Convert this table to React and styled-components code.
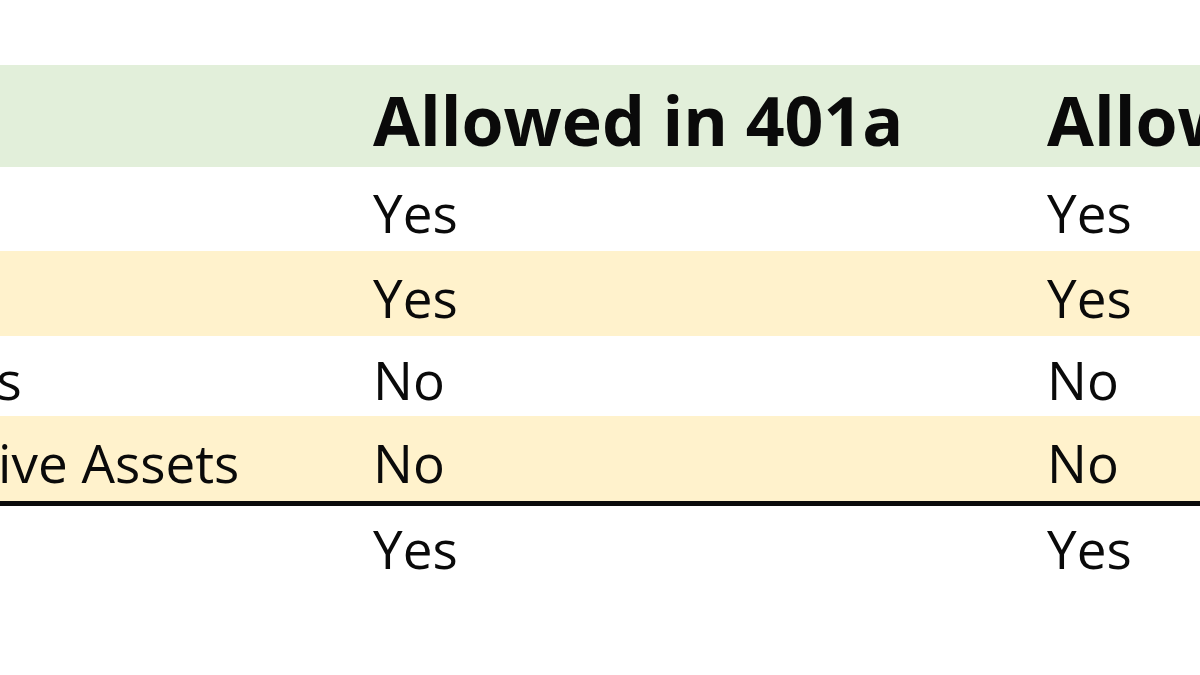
import React from 'react';
import styled, { createGlobalStyle } from 'styled-components';

const GlobalStyle = createGlobalStyle`
  html, body {
    margin: 0;
    padding: 0;
    background: #ffffff;
  }
  body {
    font-family: "Open Sans", "Noto Sans", "DejaVu Sans", sans-serif;
    color: #000;
  }
`;

const Viewport = styled.div`
  width: 1200px;
  height: 675px;
  overflow: hidden;
  padding-top: 65px;
  box-sizing: border-box;
`;

// the sheet is wider than the window; its first column is cut off on the left
const Sheet = styled.div`
  width: 1950px;
  margin-left: -207px;
`;

const Row = styled.div`
  display: grid;
  grid-template-columns: 573px 674px 700px;
  height: ${(p) => p.$height}px;
  background: ${(p) => p.$bg || '#ffffff'};
  border-bottom: ${(p) => (p.$rule ? '5px solid #0b0b0b' : 'none')};
  box-shadow: ${(p) => (p.$rule ? '0 1px 0 #c8c8c8' : 'none')};
`;

const Cell = styled.div`
  display: flex;
  align-items: center;
  padding-left: 7px;
  padding-top: ${(p) => p.$shift ?? 7}px;
  box-sizing: border-box;
  white-space: nowrap;
  font-size: 53px;
  font-weight: 400;
  color: #0a0a0a;
`;

const HeadCell = styled(Cell)`
  font-size: 68px;
  font-weight: 700;
`;

const rows = [
  { label: 'Stocks', a: 'Yes', b: 'Yes', h: 84 },
  { label: 'Bonds', a: 'Yes', b: 'Yes', h: 85, bg: '#fff2cc' },
  { label: 'Artworks', a: 'No', b: 'No', h: 80 },
  { label: 'Alternative Assets', a: 'No', b: 'No', h: 85, bg: '#fff2cc', rule: true },
  { label: 'Cash', a: 'Yes', b: 'Yes', h: 85, shift: 0 },
];

export default function App() {
  return (
    <>
      <GlobalStyle />
      <Viewport>
        <Sheet>
          <Row $height={102} $bg="#e2efda">
            <HeadCell $shift={7} />
            <HeadCell $shift={7}>Allowed in 401a</HeadCell>
            <HeadCell $shift={7}>Allowed in 403b</HeadCell>
          </Row>
          {rows.map((r) => (
            <Row key={r.label} $height={r.h} $bg={r.bg} $rule={r.rule}>
              <Cell $shift={r.shift}>{r.label}</Cell>
              <Cell $shift={r.shift}>{r.a}</Cell>
              <Cell $shift={r.shift}>{r.b}</Cell>
            </Row>
          ))}
        </Sheet>
      </Viewport>
    </>
  );
}
